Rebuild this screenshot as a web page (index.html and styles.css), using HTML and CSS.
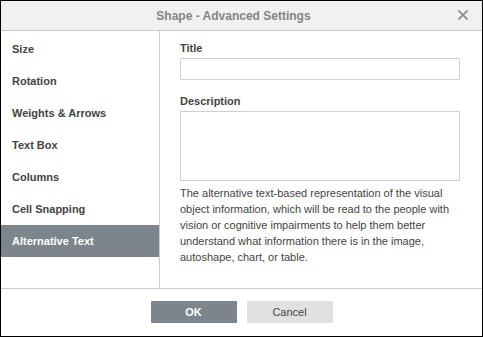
FILE: index.html
```html
<!DOCTYPE html>
<html>

<head>
    <meta charset="utf-8">
    <title>Shape - Advanced Settings</title>
    <link rel="stylesheet" href="styles.css">
</head>

<body>
    <div class="dialog">
        <div class="dlg-header">
            <span class="dlg-title">Shape - Advanced Settings</span>
            <span class="dlg-close">
                <svg width="10" height="10" viewBox="0 0 10 10">
                    <path d="M0.5 0.5 L9.5 9.5 M9.5 0.5 L0.5 9.5" stroke="#888" stroke-width="1.6" fill="none"/>
                </svg>
            </span>
        </div>
        <div class="dlg-body">
            <ul class="side-menu">
                <li>Size</li>
                <li>Rotation</li>
                <li>Weights &amp; Arrows</li>
                <li>Text Box</li>
                <li>Columns</li>
                <li>Cell Snapping</li>
                <li class="active">Alternative Text</li>
            </ul>
            <div class="panel">
                <label class="field-label">Title</label>
                <input type="text" class="f-input">
                <label class="field-label label-desc">Description</label>
                <textarea class="f-area"></textarea>
                <p class="hint">The alternative text-based representation of the visual object information, which will be read to the people with vision or cognitive impairments to help them better understand what information there is in the image, autoshape, chart, or table.</p>
            </div>
        </div>
        <div class="dlg-footer">
            <a href="javascript:;" class="btn btn-primary">OK</a>
            <a href="javascript:;" class="btn">Cancel</a>
        </div>
    </div>
</body>

</html>
```

FILE: styles.css
```css
* {
    margin: 0;
    padding: 0;
    box-sizing: border-box;
}

body {
    font: 11px/14px "Liberation Sans", Arial, sans-serif;
    color: #444;
    background: #fff;
}

.dialog {
    width: 483px;
    height: 337px;
    border: 1px solid #000;
    display: flex;
    flex-direction: column;
    background: #fff;
}

.dlg-header {
    position: relative;
    height: 30px;
    flex: none;
    background: #f1f1f1;
    border-bottom: 1px solid #cbcbcb;
    display: flex;
    align-items: center;
    justify-content: center;
    padding-right: 16px;
}

.dlg-title {
    font: 700 12px/14px "Liberation Sans", Arial, sans-serif;
    color: #848484;
}

.dlg-close {
    position: absolute;
    right: 14px;
    top: 9px;
    width: 10px;
    height: 10px;
    display: flex;
}

.dlg-body {
    flex: 1;
    display: flex;
    border-bottom: 1px solid #cbcbcb;
}

.side-menu {
    width: 159px;
    flex: none;
    list-style: none;
    padding-top: 2px;
    border-right: 1px solid #cbcbcb;
}

.side-menu li {
    height: 32px;
    line-height: 32px;
    padding-left: 11px;
    font-weight: 700;
    color: #444;
}

.side-menu li.active {
    background: #7d858c;
    color: #fff;
}

.panel {
    flex: 1;
    padding: 10px 0 0 20px;
    display: flex;
    flex-direction: column;
}

.field-label {
    display: block;
    font-weight: 700;
    margin-bottom: 3px;
}

.label-desc {
    margin-top: 14px;
}

.f-input,
.f-area {
    width: 280px;
    border: 1px solid #cfcfcf;
    border-radius: 1px;
    background: #fff;
    font: inherit;
    outline: none;
    resize: none;
}

.f-input {
    height: 22px;
}

.f-area {
    height: 70px;
}

.hint {
    width: 280px;
    margin-top: 4px;
    line-height: 16px;
}

.dlg-footer {
    height: 47px;
    flex: none;
    display: flex;
    justify-content: center;
    align-items: center;
    gap: 10px;
    padding-bottom: 2px;
}

.btn {
    display: block;
    width: 86px;
    height: 22px;
    line-height: 22px;
    text-align: center;
    text-decoration: none;
    background: #e1e1e1;
    color: #444;
    border-radius: 1px;
}

.btn-primary {
    background: #7d858c;
    color: #fff;
    font-weight: 700;
}
```
